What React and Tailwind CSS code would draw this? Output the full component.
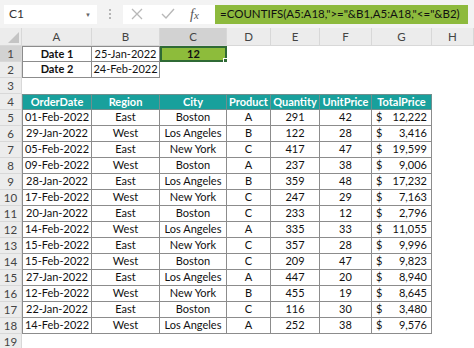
import React from 'react';

const cols = ['A', 'B', 'C', 'D', 'E', 'F', 'G', 'H'];

const rows = [
  ['01-Feb-2022', 'East', 'Boston', 'A', '291', '42', '12,222'],
  ['29-Jan-2022', 'West', 'Los Angeles', 'B', '122', '28', '3,416'],
  ['05-Feb-2022', 'East', 'New York', 'C', '417', '47', '19,599'],
  ['09-Feb-2022', 'West', 'Boston', 'A', '237', '38', '9,006'],
  ['28-Jan-2022', 'East', 'Los Angeles', 'B', '359', '48', '17,232'],
  ['17-Feb-2022', 'West', 'New York', 'C', '247', '29', '7,163'],
  ['20-Jan-2022', 'East', 'Boston', 'C', '233', '12', '2,796'],
  ['14-Feb-2022', 'West', 'Los Angeles', 'A', '335', '33', '11,055'],
  ['15-Feb-2022', 'East', 'New York', 'C', '357', '28', '9,996'],
  ['15-Feb-2022', 'West', 'Boston', 'C', '209', '47', '9,823'],
  ['27-Jan-2022', 'East', 'Los Angeles', 'A', '447', '20', '8,940'],
  ['12-Feb-2022', 'West', 'New York', 'B', '455', '19', '8,645'],
  ['22-Jan-2022', 'East', 'Boston', 'C', '116', '30', '3,480'],
  ['14-Feb-2022', 'West', 'Los Angeles', 'A', '252', '38', '9,576'],
];

const headers = ['OrderDate', 'Region', 'City', 'Product', 'Quantity', 'UnitPrice', 'TotalPrice'];

function RowNum({ n, active }) {
  return (
    <div
      className={`flex items-center justify-center border-b border-r border-[#d8d8d8] text-[11.5px] text-[#444] ${
        active ? 'bg-[#d2d2d2]' : 'bg-[#ececec]'
      }`}
    >
      {n}
    </div>
  );
}

function Cell({ children, className = '' }) {
  return <div className={`flex items-center justify-center whitespace-nowrap ${className}`}>{children}</div>;
}

export default function App() {
  const grid = 'grid grid-cols-[22px_70px_68px_67px_44px_49px_52px_60px_1fr] auto-rows-[16px]';
  const b = 'border-r border-b border-[#8c8c8c]';

  return (
    <div className="w-[474px] h-[348px] overflow-hidden bg-white text-[#111] font-['Lato',_sans-serif]">
      {/* formula bar */}
      <div className="h-[28px] bg-[#f3f3f3] flex items-center pl-[4px]">
        <div className="w-[93px] h-[19px] bg-white flex items-center justify-between pl-[5px] pr-[6px]">
          <span className="text-[12px] text-[#333]">C1</span>
          <span className="text-[6px] text-[#666]">▼</span>
        </div>
        <div className="w-[26px] flex justify-center">
          <div className="flex flex-col gap-[2px]">
            <span className="w-[2px] h-[2px] bg-[#b5b5b5]" />
            <span className="w-[2px] h-[2px] bg-[#b5b5b5]" />
            <span className="w-[2px] h-[2px] bg-[#b5b5b5]" />
          </div>
        </div>
        <div className="w-[92px] h-[19px] bg-white flex items-center">
          <svg width="12" height="12" viewBox="0 0 12 12" className="ml-[8px]">
            <path d="M1 1L11 11M11 1L1 11" stroke="#b8b8b8" strokeWidth="1.3" />
          </svg>
          <svg width="14" height="12" viewBox="0 0 14 12" className="ml-[18px]">
            <path d="M1 6L5 10L13 1" stroke="#b8b8b8" strokeWidth="1.4" fill="none" />
          </svg>
          <span className="ml-[15px] text-[14px] italic text-[#555] font-['Liberation_Serif',_serif]">
            f<span className="text-[11px]">x</span>
          </span>
        </div>
        <div className="w-[253px] h-[19px] bg-[#8dba3d] flex items-center pl-[5px] text-[11.5px] text-[#111] whitespace-nowrap">
          =COUNTIFS(A5:A18,"&gt;="&amp;B1,A5:A18,"&lt;="&amp;B2)
        </div>
      </div>

      {/* sheet */}
      <div className="grid grid-cols-[22px_70px_68px_67px_44px_49px_52px_60px_1fr] auto-rows-[18px]">
        <div className="bg-[#ececec] border-r border-b border-[#d8d8d8] relative">
          <div className="absolute right-[2px] bottom-[2px] w-0 h-0 border-l-[11px] border-l-transparent border-b-[11px] border-b-[#c4c4c4]" />
        </div>
        {cols.map((c) => (
          <div
            key={c}
            className={`flex items-center justify-center text-[11.5px] text-[#444] border-r border-b border-[#d8d8d8] ${
              c === 'C' ? 'bg-[#d2d2d2]' : 'bg-[#ececec]'
            }`}
          >
            {c}
          </div>
        ))}
      </div>

      <div className={`${grid} text-[11px]`}>
        {/* row 1 */}
        <RowNum n={1} active />
        <Cell className={`${b} border-t border-l font-bold`}>Date 1</Cell>
        <Cell className={`${b} border-t`}>25-Jan-2022</Cell>
        <div className="relative bg-[#8dbc3b] border-2 border-[#2f6a35] flex items-center justify-center font-bold">
          12
          <div className="absolute -right-[3px] -bottom-[3px] w-[5px] h-[5px] bg-[#2f6a35] border border-white" />
        </div>
        <div className="col-span-5" />

        {/* row 2 */}
        <RowNum n={2} />
        <Cell className={`${b} border-l font-bold`}>Date 2</Cell>
        <Cell className={b}>24-Feb-2022</Cell>
        <div className="col-span-6" />

        {/* row 3 */}
        <RowNum n={3} />
        <div className="col-span-8" />

        {/* row 4 headers */}
        <RowNum n={4} />
        {headers.map((h, i) => (
          <Cell
            key={h}
            className={`bg-[#18a09c] text-white font-bold border-r border-b border-t border-[#6f8f8e] ${
              i === 0 ? 'border-l' : ''
            }`}
          >
            {h}
          </Cell>
        ))}
        <div />

        {rows.map((r, i) => (
          <React.Fragment key={i}>
            <RowNum n={i + 5} />
            <Cell className={`${b} border-l`}>{r[0]}</Cell>
            <Cell className={b}>{r[1]}</Cell>
            <Cell className={b}>{r[2]}</Cell>
            <Cell className={b}>{r[3]}</Cell>
            <Cell className={b}>{r[4]}</Cell>
            <Cell className={b}>{r[5]}</Cell>
            <div className={`${b} flex items-center justify-between pl-[4px] pr-[4px]`}>
              <span>$</span>
              <span>{r[6]}</span>
            </div>
            <div />
          </React.Fragment>
        ))}

        <RowNum n={19} />
        <div className="col-span-8" />
      </div>
    </div>
  );
}
